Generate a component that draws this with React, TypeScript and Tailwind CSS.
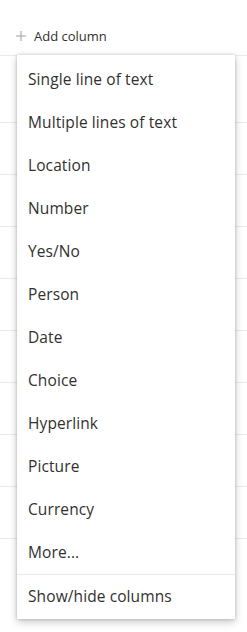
import React from "react";

const items = [
  "Single line of text",
  "Multiple lines of text",
  "Location",
  "Number",
  "Yes/No",
  "Person",
  "Date",
  "Choice",
  "Hyperlink",
  "Picture",
  "Currency",
  "More...",
];

export default function App() {
  const font = { fontFamily: '"Open Sans", "Noto Sans", sans-serif' };
  return (
    <div className="relative w-[247px] h-[632px] bg-white overflow-hidden" style={font}>
      <div className="flex flex-col">
        <div className="h-[56px] border-b border-[#edebe9] flex items-end pb-[9px] pl-[16px]">
          <div className="flex items-center gap-[8px] text-[13px] text-[#323130]">
            <svg width="10" height="10" viewBox="0 0 10 10" className="text-[#a19f9d]">
              <path d="M5 0v10M0 5h10" stroke="currentColor" strokeWidth="1" />
            </svg>
            <span>Add column</span>
          </div>
        </div>
        <div className="h-[67px] border-b border-[#edebe9]" />
        {Array.from({ length: 8 }).map((_, i) => (
          <div key={i} className="h-[52px] border-b border-[#edebe9]" />
        ))}
      </div>
      <div className="absolute left-[17px] top-[55px] w-[218px] bg-white shadow-[0_3px_8px_rgba(0,0,0,0.22),0_0_3px_rgba(0,0,0,0.2)] pt-[3px] pb-px">
        {items.map((t) => (
          <div key={t} className="h-[43px] flex items-center px-[11px] text-[15.5px] tracking-[0.1px] text-[#323130]">
            {t}
          </div>
        ))}
        <div className="h-px bg-[#edebe9]" />
        <div className="h-[43px] flex items-center px-[11px] text-[15.5px] tracking-[0.1px] text-[#323130]">
          Show/hide columns
        </div>
      </div>
    </div>
  );
}
